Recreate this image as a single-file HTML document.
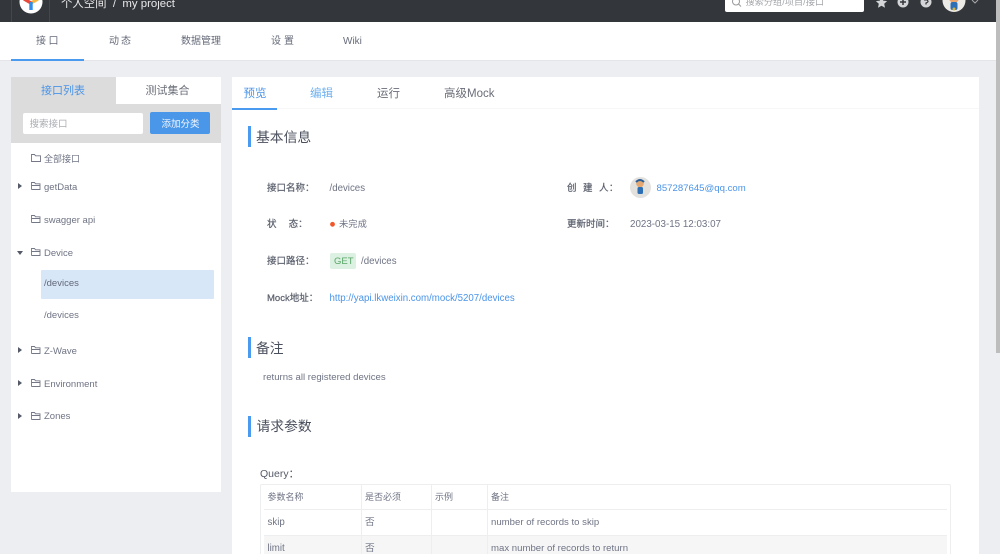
<!DOCTYPE html>
<html lang="zh"><head><meta charset="utf-8"><title>my project</title>
<style>
html,body{margin:0;padding:0;width:1000px;height:554px;overflow:hidden;background:#eceef2}
body{font-family:"Liberation Sans","Noto Sans CJK SC",sans-serif;color:#6b7080;position:relative}
#w{position:absolute;left:0;top:0;width:1000px;height:554px;overflow:hidden;filter:blur(.35px)}
.a{position:absolute;white-space:nowrap;line-height:1;transform:translateY(1px)}
.b{position:absolute}
.f{position:absolute;width:12px;height:10px}
.n{font-size:10px;color:#666b7a}
.t{font-size:9.5px;color:#6f7484}
.l{font-size:9.5px;color:#5a5f6c;-webkit-text-stroke:.2px #5a5f6c}
.v{font-size:9.7px;color:#6f7484}
.h{font-size:13.8px;color:#4a4f5c}
.bar{position:absolute;left:248px;width:3px;height:21px;background:#4a9af0}
.tri{position:absolute;left:18px;width:0;height:0;border-top:3px solid transparent;border-bottom:3px solid transparent;border-left:4px solid #555a68}
</style></head><body><div id="w">
<div class="b" style="left:0;top:0;width:1000px;height:22px;background:#33363b"></div>
<div class="b" style="left:11px;top:0;width:1px;height:22px;background:#44474c"></div>
<div class="b" style="left:49px;top:0;width:1px;height:22px;background:#44474c"></div>
<svg class="b" style="left:19px;top:-10px" width="24" height="24" viewBox="0 0 24 24"><circle cx="12" cy="12" r="11.5" fill="#fff"/><path d="M5 9l7 4v0l7-4" stroke="#f4b63f" stroke-width="3.2" fill="none"/><path d="M5 9l7 4" stroke="#e8483c" stroke-width="3.2"/><path d="M12 12v8" stroke="#2f8de8" stroke-width="3.4"/></svg>
<div class="a" style="left:61px;top:-2.500px;font-size:11.4px;color:#e8e9ea">个人空间&nbsp; /&nbsp; my project</div>
<div class="b" style="left:725px;top:-6px;width:139px;height:18px;background:#fff;border-radius:2px"></div>
<svg class="b" style="left:731px;top:-3px" width="11" height="11" viewBox="0 0 11 11" fill="none" stroke="#999"><circle cx="5" cy="4.500" r="3.500"/><path d="M7.500 7l2.500 2.500"/></svg>
<div class="a" style="left:745.500px;top:-3px;font-size:9.2px;color:#a3a5aa">搜索分组/项目/接口</div>
<svg class="b" style="left:875px;top:-3px" width="13" height="11" viewBox="0 0 13 11"><path d="M6.500 0l1.700 3.600 3.900.5-2.900 2.700.8 3.900-3.500-2-3.500 2 .8-3.900L.9 4.100l3.900-.5z" fill="#d4d5d6"/></svg>
<svg class="b" style="left:897px;top:-3px" width="12" height="11" viewBox="0 0 12 11"><circle cx="6" cy="5" r="5.500" fill="#d4d5d6"/><path d="M3 5h6M6 2v6" stroke="#33363b" stroke-width="1.500"/></svg>
<svg class="b" style="left:920px;top:-3px" width="12" height="11" viewBox="0 0 12 11"><circle cx="6" cy="5" r="5.500" fill="#d4d5d6"/><path d="M4.500 3.500q1.500-1.500 3 0t-1.500 2.500v1.500" stroke="#33363b" stroke-width="1.200" fill="none"/></svg>
<svg class="b" style="left:942px;top:-11px" width="24" height="23" viewBox="0 0 24 23"><circle cx="12" cy="11.500" r="11.500" fill="#eceae6"/><circle cx="12" cy="9" r="5" fill="#e8a66e"/><rect x="8.500" y="13" width="7" height="8" rx="2" fill="#2d6fb4"/><circle cx="12" cy="20" r="1.500" fill="#d8b03c"/></svg>
<svg class="b" style="left:971px;top:-1px" width="8" height="6" viewBox="0 0 8 6" fill="none" stroke="#a8a9ab"><path d="M1 1l3 3 3-3"/></svg>
<div class="b" style="left:0;top:22px;width:1000px;height:38px;background:#fff"></div>
<div class="b" style="left:0;top:60px;width:1000px;height:1px;background:#e4e5e8"></div>
<div class="b" style="left:11px;top:59px;width:73px;height:2px;background:#4a9af0"></div>
<div class="a n" style="left:36px;top:35.500px;letter-spacing:2.500px">接口</div>
<div class="a n" style="left:109px;top:35.500px;letter-spacing:2px">动态</div>
<div class="a n" style="left:181px;top:35.500px">数据管理</div>
<div class="a n" style="left:271px;top:35.500px;letter-spacing:3px">设置</div>
<div class="a n" style="left:343px;top:35.500px">Wiki</div>

<div class="b" style="left:11px;top:77px;width:210px;height:415px;background:#fff"></div>
<div class="b" style="left:11px;top:77px;width:210px;height:66px;background:#dcdcdc"></div>
<div class="b" style="left:116px;top:77px;width:105px;height:27px;background:#fff"></div>
<div class="a" style="left:41px;top:85px;font-size:11px;color:#4a94e8">接口列表</div>
<div class="a" style="left:145.500px;top:85px;font-size:11px;color:#6a6e78">测试集合</div>
<div class="b" style="left:23px;top:113px;width:120px;height:21px;background:#fff;border-radius:2px"></div>
<div class="a" style="left:29.500px;top:119px;font-size:9.500px;color:#aaadb3">搜索接口</div>
<div class="b" style="left:149.500px;top:112px;width:60px;height:22px;background:#4a97ea;border-radius:2px"></div>
<div class="a" style="left:161.500px;top:118.500px;font-size:9.500px;color:#f2f7fd">添加分类</div>

<svg width="0" height="0" style="position:absolute"><defs><symbol id="o" viewBox="0 0 12 10"><path d="M1.500 8.500V1.500h3l1 1.300h4.500v1.700M1.500 8.500h8.500V4.500H1.500" fill="none" stroke="#737786" stroke-width=".9"/></symbol></defs></svg>
<svg class="f" style="left:30px;top:153px" viewBox="0 0 12 10"><path d="M1.500 1.500h3l1 1.300h5v5.700h-9z" fill="none" stroke="#737786" stroke-width=".9"/></svg>
<div class="a t" style="left:44px;top:154px;font-size:9px">全部接口</div>
<div class="tri" style="top:183px"></div><svg class="f" style="left:30px;top:181px"><use href="#o"/></svg><div class="a t" style="left:44px;top:181.500px">getData</div>
<svg class="f" style="left:30px;top:214px"><use href="#o"/></svg><div class="a t" style="left:44px;top:214.500px">swagger api</div>
<div class="b" style="left:17px;top:251px;width:0;height:0;border-left:3px solid transparent;border-right:3px solid transparent;border-top:4px solid #555a68"></div><svg class="f" style="left:30px;top:247px"><use href="#o"/></svg><div class="a t" style="left:44px;top:247.500px">Device</div>
<div class="b" style="left:40.500px;top:270px;width:173px;height:28.500px;background:#d7e7f8;border-radius:1px"></div>
<div class="a t" style="left:44px;top:277.500px;color:#636877">/devices</div>
<div class="a t" style="left:44px;top:310px">/devices</div>
<div class="tri" style="top:347px"></div><svg class="f" style="left:30px;top:345px"><use href="#o"/></svg><div class="a t" style="left:44px;top:345.500px">Z-Wave</div>
<div class="tri" style="top:380px"></div><svg class="f" style="left:30px;top:378px"><use href="#o"/></svg><div class="a t" style="left:44px;top:378.500px">Environment</div>
<div class="tri" style="top:412.500px"></div><svg class="f" style="left:30px;top:411px"><use href="#o"/></svg><div class="a t" style="left:44px;top:411px">Zones</div>

<div class="b" style="left:232px;top:77px;width:747px;height:477px;background:#fff"></div>
<div class="b" style="left:232px;top:108px;width:747px;height:1px;background:#f6f7f8"></div>
<div class="b" style="left:232px;top:108px;width:45px;height:2px;background:#4a9af0"></div>
<div class="a" style="left:243.500px;top:88px;font-size:11.500px;color:#4a94e8">预览</div>
<div class="a" style="left:310px;top:88px;font-size:11.500px;color:#6eb0f0">编辑</div>
<div class="a" style="left:377px;top:88px;font-size:11.500px;color:#6a6e78">运行</div>
<div class="a" style="left:444px;top:88px;font-size:11.500px;color:#6a6e78">高级Mock</div>

<div class="bar" style="top:126px"></div>
<div class="a h" style="left:256px;top:129.500px">基本信息</div>
<div class="a l" style="left:267px;top:183px">接口名称：</div><div class="a v" style="left:329.500px;top:183px">/devices</div>
<div class="a l" style="left:267px;top:219px">状&emsp;&nbsp;态：</div>
<svg class="b" style="left:329px;top:221px" width="7" height="7" viewBox="0 0 7 7"><circle cx="3.500" cy="3.300" r="2.400" fill="#f2562b"/></svg>
<div class="a v" style="left:339px;top:219px;font-size:9.300px">未完成</div>
<div class="a l" style="left:267px;top:255.500px">接口路径：</div>
<div class="b" style="left:329.500px;top:253px;width:26px;height:16px;background:#dcf1e2;border-radius:2px"></div>
<div class="a" style="left:334px;top:255.500px;font-size:9.500px;color:#5aa568">GET</div>
<div class="a v" style="left:361px;top:255.500px">/devices</div>
<div class="a l" style="left:267px;top:292.500px">Mock地址：</div>
<div class="a" style="left:329.500px;top:292.500px;font-size:9.700px;color:#4a94e8">http://yapi.lkweixin.com/mock/5207/devices</div>
<div class="a l" style="left:567px;top:183px;letter-spacing:.4px">创&nbsp;&nbsp;建&nbsp;&nbsp;人：</div>
<svg class="b" style="left:630px;top:177px" width="21" height="21" viewBox="0 0 21 21"><circle cx="10.500" cy="10.500" r="10.500" fill="#e3e1de"/><circle cx="10" cy="6.500" r="3.800" fill="#e5a872"/><path d="M6 5q4-4 8 0" stroke="#2d5f96" stroke-width="2" fill="none"/><rect x="7.500" y="10" width="5.500" height="7" rx="1.500" fill="#2d6fb4"/></svg>
<div class="a" style="left:656.500px;top:183px;font-size:9.600px;color:#4a94e8">857287645@qq.com</div>
<div class="a l" style="left:567px;top:219px">更新时间：</div>
<div class="a v" style="left:630px;top:219px;font-size:9.800px">2023-03-15 12:03:07</div>

<div class="bar" style="top:337px"></div>
<div class="a h" style="left:256px;top:341px">备注</div>
<div class="a v" style="left:263px;top:371.500px;font-size:9.600px">returns all registered devices</div>

<div class="bar" style="top:416px"></div>
<div class="a h" style="left:256.500px;top:419px">请求参数</div>
<div class="a" style="left:260px;top:467.500px;font-size:10.500px;color:#555a66">Query：</div>

<div class="b" style="left:260px;top:484px;width:691px;height:80px;border:1px solid #eceef0;border-radius:2px;box-sizing:border-box"></div>
<div class="b" style="left:264px;top:509px;width:683px;height:1px;background:#eceef0"></div>
<div class="b" style="left:264px;top:534.500px;width:683px;height:1px;background:#eceef0"></div>
<div class="b" style="left:264px;top:535.500px;width:683px;height:19px;background:#f6f6f7"></div>
<div class="b" style="left:361px;top:485px;width:1px;height:69px;background:#eceef0"></div>
<div class="b" style="left:431px;top:485px;width:1px;height:69px;background:#eceef0"></div>
<div class="b" style="left:487px;top:485px;width:1px;height:69px;background:#eceef0"></div>
<div class="a v" style="left:267.500px;top:491.500px;font-size:9px">参数名称</div>
<div class="a v" style="left:365px;top:491.500px;font-size:9px">是否必须</div>
<div class="a v" style="left:435px;top:491.500px;font-size:9px">示例</div>
<div class="a v" style="left:491px;top:491.500px;font-size:9px">备注</div>
<div class="a v" style="left:267.500px;top:517px">skip</div>
<div class="a v" style="left:365px;top:517px">否</div>
<div class="a v" style="left:491px;top:517px;font-size:9.600px">number of records to skip</div>
<div class="a v" style="left:267.500px;top:542.500px">limit</div>
<div class="a v" style="left:365px;top:542.500px">否</div>
<div class="a v" style="left:491px;top:542.500px;font-size:9.600px">max number of records to return</div>

<div class="b" style="left:996px;top:0;width:4px;height:554px;background:#eceef2"></div>
<div class="b" style="left:996px;top:0;width:4px;height:353px;background:#bdbdbd"></div>
</div></body></html>
